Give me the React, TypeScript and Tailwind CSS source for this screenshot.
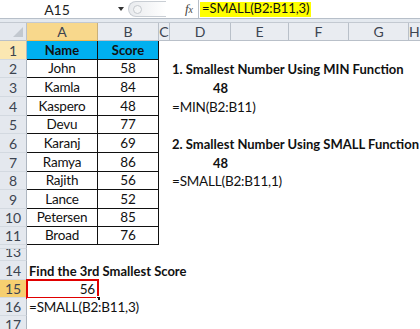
import React from 'react';

const COLS = ['A', 'B', 'C', 'D', 'E', 'F', 'G', 'H'];

// row heights in px, index 0 = row 1
const ROW_H = [19, 18, 19, 19, 18, 19, 19, 18, 19, 18, 18, 4, 12, 19, 18, 18, 18];

const people = [
  ['John', '58'],
  ['Kamla', '84'],
  ['Kaspero', '48'],
  ['Devu', '77'],
  ['Karanj', '69'],
  ['Ramya', '86'],
  ['Rajith', '56'],
  ['Lance', '52'],
  ['Petersen', '85'],
  ['Broad', '76'],
];

const font = { fontFamily: 'Lato, "Liberation Sans", sans-serif' };

const FormulaBar = () => (
  <div className="h-[23px] bg-[#e4e9ef] border-b border-[#c3c9d1]">
    <div className="h-[19px] bg-white border-b border-[#b7bfc9] flex items-stretch">
      <div className="w-[114px] flex items-center justify-center text-[14px] text-[#222]">A15</div>
      <div className="w-[14px] flex items-center justify-center">
        <div className="w-0 h-0 border-l-[3px] border-r-[3px] border-t-[4px] border-l-transparent border-r-transparent border-t-[#333]" />
      </div>
      <div className="w-[38px] my-[1px] rounded-l-full border border-r-0 border-[#c9ced4] bg-gradient-to-r from-[#e9ebee] to-white flex items-center pl-[4px]">
        <div className="w-[9px] h-[9px] rounded-full border border-[#c4c8cd] bg-[#f4f5f6]" />
      </div>
      <div className="w-[32px] flex items-center justify-center pl-[14px]">
        <span className="text-[13px] italic text-[#444]" style={{ fontFamily: '"Liberation Serif", serif' }}>
          f<span className="text-[10px]">x</span>
        </span>
      </div>
      <div className="flex-1 border-l border-[#b7bfc9] flex items-center pl-[1px]">
        <span className="bg-[#ffff00] h-[15px] px-[2px] flex items-center text-[13px] tracking-[-0.1px] text-[#111]">
          =SMALL(B2:B11,3)
        </span>
      </div>
    </div>
  </div>
);

type Cell = {
  text?: string;
  bold?: boolean;
  align?: 'left' | 'center' | 'right';
  bg?: string;
  border?: boolean;
  overflow?: boolean;
};

const getCell = (r: number, c: string): Cell => {
  if (r === 1 && (c === 'A' || c === 'B'))
    return { text: c === 'A' ? 'Name' : 'Score', bold: true, align: 'center', bg: 'bg-[#00b0f0]', border: true };
  if (r >= 2 && r <= 11 && (c === 'A' || c === 'B')) {
    const p = people[r - 2];
    return { text: c === 'A' ? p[0] : p[1], align: 'center', border: true };
  }
  if (c === 'D') {
    if (r === 2) return { text: '1. Smallest Number Using MIN Function', bold: true, overflow: true };
    if (r === 3 || r === 7) return { text: '48', bold: true, align: 'right' };
    if (r === 4) return { text: '=MIN(B2:B11)', overflow: true };
    if (r === 6) return { text: '2. Smallest Number Using SMALL Function', bold: true, overflow: true };
    if (r === 8) return { text: '=SMALL(B2:B11,1)', overflow: true };
  }
  if (c === 'A') {
    if (r === 14) return { text: 'Find the 3rd Smallest Score', bold: true, overflow: true };
    if (r === 15) return { text: '56', align: 'right' };
    if (r === 16) return { text: '=SMALL(B2:B11,3)', overflow: true };
  }
  return {};
};

const RowHeader = ({ r, h }: { r: number; h: number }) => {
  const bg = r === 15 ? 'bg-[#f6cf70]' : r === 1 ? 'bg-[#fbe7b2]' : 'bg-[#e4e8ee]';
  return (
    <div
      className={`${bg} border-r border-r-[#aeb6c0] border-b border-b-[#d3d9e0] overflow-hidden flex justify-center text-[14px] text-[#3c4450] ${
        r === 12 ? 'items-start' : 'items-end'
      }`}
      style={{ height: h }}
    >
      <span className="leading-[17px]">{r}</span>
    </div>
  );
};

const GridCell = ({ r, c, h }: { r: number; c: string; h: number }) => {
  const cell = getCell(r, c);
  const selected = r === 15 && c === 'A';
  const just =
    cell.align === 'center' ? 'justify-center' : cell.align === 'right' ? 'justify-end' : 'justify-start';
  return (
    <div
      className={`relative flex items-end px-[3px] ${just} ${cell.bg ?? 'bg-white'} ${
        cell.border ? 'border-r border-b border-[#111]' : ''
      } ${selected || cell.overflow ? 'z-10' : ''}`}
      style={{ height: h }}
    >
      {cell.text && (
        <span
          className={`leading-[17px] text-[#111] whitespace-nowrap ${
            cell.bold ? 'font-bold text-[13px]' : 'text-[13.5px] tracking-[-0.2px]'
          } ${cell.overflow ? 'absolute left-[2px] bottom-0' : ''}`}
        >
          {cell.text}
        </span>
      )}
      {selected && (
        <>
          <div className="absolute -left-[1px] -top-[1px] w-[73px] h-[20px] border-2 border-[#e00000]" />
          <div className="absolute -right-[3px] -bottom-[3px] w-[5px] h-[5px] bg-[#111] border border-white" />
        </>
      )}
    </div>
  );
};

export default function App() {
  return (
    <div className="w-[420px] h-[329px] overflow-hidden bg-white" style={font}>
      <FormulaBar />
      <div className="grid grid-cols-[27px_71px_61px_11px_61px_58px_60px_60px_1fr]">
        {/* column headers */}
        <div className="h-[18px] bg-[#e4e8ee] border-r border-b border-[#b9c0c9] flex items-end justify-end p-[3px]">
          <svg width="10" height="10" viewBox="0 0 10 10">
            <path d="M10 0 L10 10 L0 10 Z" fill="#c2c8cf" />
          </svg>
        </div>
        {COLS.map((c) => (
          <div
            key={c}
            className={`h-[18px] flex items-center justify-center text-[14px] text-[#3c4450] border-r border-b ${
              c === 'A' ? 'bg-[#f8d88c] border-b-[#f2b94c] border-r-[#c9b07a]' : 'bg-[#e9ecf1] border-[#b9c0c9]'
            }`}
          >
            {c}
          </div>
        ))}
        {ROW_H.map((h, i) => {
          const r = i + 1;
          return (
            <React.Fragment key={r}>
              <RowHeader r={r} h={h} />
              {COLS.map((c) => (
                <GridCell key={c} r={r} c={c} h={h} />
              ))}
            </React.Fragment>
          );
        })}
      </div>
    </div>
  );
}
